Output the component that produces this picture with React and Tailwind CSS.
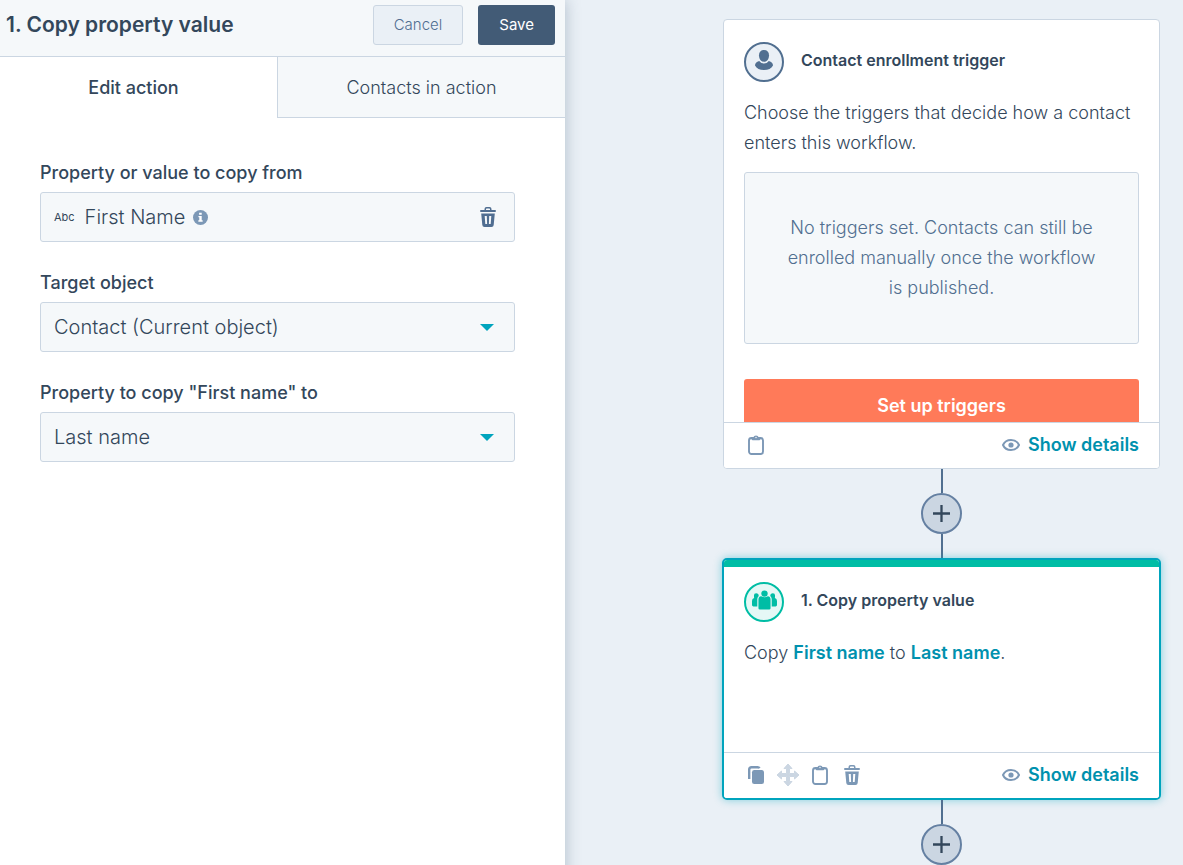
import React from "react";

// --- Icons ---
const TrashIcon = ({ className }) => (
  <svg viewBox="0 0 16 20" className={className} fill="currentColor" aria-hidden="true">
    <path d="M4.5 3V2Q4.5 0 6.500 0H9.500Q11.500 0 11.500 2V3H15Q16 3 16 4T15 5H1Q0 5 0 4T1 3ZM6 3H10V2.200Q10 1.500 9.300 1.500H6.700Q6 1.500 6 2.200Z" />
    <path
      fillRule="evenodd"
      d="M1.200 6.500H14.800L13.700 18Q13.500 20 11.500 20H4.500Q2.500 20 2.300 18ZM4.700 9L5.300 17H7.100L6.800 9ZM9.200 9L8.900 17H10.700L11.300 9Z"
    />
  </svg>
);

const ClipboardIcon = ({ className }) => (
  <svg viewBox="0 0 16 20" className={className} fill="none" aria-hidden="true">
    <rect x="1" y="3" width="14" height="16" rx="2.500" stroke="currentColor" strokeWidth="1.900" />
    <path fill="currentColor" d="M3 2.800H5Q6 .5 8 .5T11 2.800H13Q12.800 5.200 11.500 5.200H4.500Q3.200 5.200 3 2.800Z" />
    <circle cx="8" cy="2.500" r=".7" fill="#fff" />
  </svg>
);

const EyeIcon = ({ className }) => (
  <svg viewBox="0 0 18 12" className={className} fill="none" aria-hidden="true">
    <path
      stroke="currentColor"
      strokeWidth="2"
      d="M1 6C2.500 2.600 5.500 1 9 1S15.500 2.600 17 6C15.500 9.400 12.500 11 9 11S2.500 9.400 1 6Z"
    />
    <circle cx="9" cy="6" r="2.600" fill="currentColor" />
  </svg>
);

const CopyIcon = ({ className }) => (
  <svg viewBox="0 0 16 18" className={className} aria-hidden="true">
    <path
      fill="none"
      stroke="currentColor"
      strokeWidth="2.400"
      d="M1.200 13V3.500Q1.200 1.200 3.500 1.200H9.500Q11 1.200 11.500 2.300"
    />
    <rect x="4" y="4" width="12" height="14" rx="2.300" fill="currentColor" />
  </svg>
);

const MoveIcon = ({ className }) => (
  <svg viewBox="0 0 24 24" className={className} fill="currentColor" aria-hidden="true">
    <path
      stroke="currentColor"
      strokeLinejoin="round"
      d="M12 1L16 5.500H13.500V10.500H18.500V8L23 12L18.500 16V13.500H13.500V18.500H16L12 23L8 18.500H10.500V13.500H5.500V16L1 12L5.500 8V10.500H10.500V5.500H8Z"
    />
  </svg>
);

const PersonIcon = ({ className }) => (
  <svg viewBox="0 0 18 20" className={className} fill="currentColor" aria-hidden="true">
    <path d="M9 0C12.200 0 14 2 14 5.200C14 9 12 11.800 9 11.800S4 9 4 5.200C4 2 5.800 0 9 0Z" />
    <path d="M4.200 11Q6 13.500 9 13.500T13.800 11Q18 12.200 18 15.500Q15.500 20 9 20T0 15.500Q0 12.200 4.200 11Z" />
  </svg>
);

const GroupIcon = ({ className }) => (
  <svg viewBox="0 0 26 20" className={className} fill="currentColor" aria-hidden="true">
    <circle cx="13" cy="3.300" r="3.300" />
    <path d="M9.500 6.200Q13 8 16.500 6.200Q19.300 6.500 19.300 9.500V18.500Q19.300 20 17.800 20H8.200Q6.700 20 6.700 18.500V9.500Q6.700 6.500 9.500 6.200Z" />
    <path d="M2 5.500Q2 3 4.300 3Q7 3 7 5.800Q5.500 7.200 5.500 9V16.800H1.500Q0 16.800 0 15.300V11Q0 8.500 2.200 8Z" />
    <path d="M24 5.500Q24 3 21.700 3Q19 3 19 5.800Q20.500 7.200 20.500 9V16.800H24.500Q26 16.800 26 15.300V11Q26 8.500 23.800 8Z" />
  </svg>
);

const InfoIcon = ({ className }) => (
  <svg viewBox="0 0 16 16" className={className} aria-hidden="true">
    <circle cx="8" cy="8" r="8" fill="#7c98b6" />
    <path fill="#fff" d="M6.500 2.800H9.300V5H6.500ZM5.800 6.300H9.300V11H10.300V12.600H5.700V11H6.700V7.800H5.800Z" />
  </svg>
);

// --- Form fields ---
const SelectField = ({ id, label, value }) => (
  <div>
    <label htmlFor={id} className="block text-[18px] leading-6 font-medium mb-[7px]">
      {label}
    </label>
    <div className="relative">
      <select
        id={id}
        defaultValue={value}
        className="appearance-none block w-full h-[50px] pl-[13px] pr-12 rounded-[3px] border border-[#cbd6e2] bg-[#f5f8fa] text-[20px] font-light"
      >
        <option>{value}</option>
      </select>
      <svg viewBox="0 0 14 7" className="absolute right-[21px] top-[22px] w-[14px] h-[7px] pointer-events-none" aria-hidden="true">
        <path fill="#00a4bd" d="M0 0H14L7 7Z" />
      </svg>
    </div>
  </div>
);

// --- Edit panel ---
const EditPanel = () => (
  <aside className="relative z-10 bg-white shadow-[1px_0_14px_rgba(45,75,105,0.28)]">
    <header className="flex items-center justify-between pt-[5px] pb-[11px] pl-[6px] pr-[10px] bg-[#f5f8fa] border-b border-[#cbd6e2]">
      <h1 className="text-[21px] leading-6 font-semibold">1. Copy property value</h1>
      <div className="flex gap-[15px]">
        <button className="h-10 px-5 rounded-[3px] border border-[#cbd6e2] bg-[#eaf0f6] text-[#506e91] text-[15px] font-light">
          Cancel
        </button>
        <button className="h-10 px-[21px] rounded-[3px] bg-[#425b76] text-white text-[15px] font-normal">Save</button>
      </div>
    </header>
    <div role="tablist" className="grid grid-cols-[277fr_288fr]">
      <button role="tab" aria-selected="true" className="h-[61px] pr-[10px] text-[18px] font-medium">
        Edit action
      </button>
      <button
        role="tab"
        aria-selected="false"
        className="h-[61px] border-l border-b border-[#cbd6e2] bg-[#f5f8fa] text-[18px] font-light"
      >
        Contacts in action
      </button>
    </div>
    <form className="flex flex-col gap-[29px] pt-[43px] pl-10 pr-[50px]">
      <div>
        <p className="text-[18px] leading-6 font-medium mb-[7px]">Property or value to copy from</p>
        <div className="flex items-center h-[50px] pl-[13px] pr-[18px] rounded-[3px] border border-[#cbd6e2] bg-[#f5f8fa]">
          <span className="text-[11px] mr-[10px]">Abc</span>
          <span className="text-[20px] font-light">First Name</span>
          <InfoIcon className="w-[15px] h-[15px] ml-2" />
          <button type="button" aria-label="Remove" className="ml-auto text-[#506e91]">
            <TrashIcon className="w-4 h-5" />
          </button>
        </div>
      </div>
      <SelectField id="target" label="Target object" value="Contact (Current object)" />
      <SelectField id="property" label={'Property to copy "First name" to'} value="Last name" />
    </form>
  </aside>
);

// --- Workflow canvas ---
const CardFooter = ({ children }) => (
  <footer className="flex items-center h-[46px] pl-6 pr-5 pb-[2px] border-t border-[#cbd6e2] bg-white text-[#7c98b6]">
    <div className="flex items-center gap-3">{children}</div>
    <a href="#details" className="ml-auto flex items-center gap-2 text-[18px] font-semibold text-[#0091ae]">
      <EyeIcon className="w-[18px] h-3 text-[#7c98b6]" />
      Show details
    </a>
  </footer>
);

const Line = () => <div className="w-[2px] h-6 bg-[#516f90]" />;

const AddButton = () => (
  <button
    aria-label="Add action"
    className="flex items-center justify-center w-[41px] h-[41px] rounded-full border-2 border-[#6580a2] bg-[#cbd6e2] text-[#33475b]"
  >
    <svg viewBox="0 0 17 17" className="w-[17px] h-[17px]" fill="none" stroke="currentColor" strokeWidth="2.300" aria-hidden="true">
      <path d="M8.500 0V17M0 8.500H17" />
    </svg>
  </button>
);

const TriggerCard = () => (
  <article className="mx-px rounded-[4px] border border-[#cbd6e2] bg-white overflow-hidden">
    <div className="h-[402px] px-5 pt-[22px] overflow-hidden">
      <div className="flex items-start gap-[17px]">
        <span className="flex justify-center pt-[6px] w-10 h-10 rounded-full border-2 border-[#516f90] bg-[#eaf0f6] text-[#516f90]">
          <PersonIcon className="w-[18px] h-5" />
        </span>
        <h2 className="pt-[6px] text-[16px] leading-6 font-semibold">Contact enrollment trigger</h2>
      </div>
      <p className="mt-4 text-[18px] leading-[30px] font-light">
        Choose the triggers that decide how a contact enters this workflow.
      </p>
      <div className="mt-[14px] px-10 py-10 rounded-[3px] border border-[#cbd6e2] bg-[#f5f8fa] text-[18px] leading-[30px] font-light text-center text-[#516f90]">
        No triggers set. Contacts can still be enrolled manually once the workflow is published.
      </div>
      <button className="block w-full h-[52px] mt-[35px] rounded-[3px] bg-[#ff7a59] text-white text-[18px] font-semibold">
        Set up triggers
      </button>
    </div>
    <CardFooter>
      <button aria-label="Clipboard">
        <ClipboardIcon className="w-4 h-5" />
      </button>
    </CardFooter>
  </article>
);

const ActionCard = () => (
  <article className="w-full rounded-[5px] border-2 border-[#00a4bd] bg-white overflow-hidden shadow-[0_0_8px_rgba(0,164,189,0.45)]">
    <div className="h-[192px] px-5 pt-[15px] border-t-[7px] border-[#00bda5]">
      <div className="flex items-start gap-[17px]">
        <span className="flex justify-center pt-[6px] w-10 h-10 rounded-full border-2 border-[#00bda5] bg-[#e5f8f6] text-[#00bda5]">
          <GroupIcon className="w-[25px] h-5" />
        </span>
        <h2 className="pt-[6px] text-[16px] leading-6 font-semibold">1. Copy property value</h2>
      </div>
      <p className="mt-4 text-[18px] leading-[30px] font-light">
        Copy <span className="font-semibold text-[#0091ae]">First name</span> to{" "}
        <span className="font-semibold text-[#0091ae]">Last name</span>.
      </p>
    </div>
    <CardFooter>
      <button aria-label="Copy">
        <CopyIcon className="w-4 h-[18px]" />
      </button>
      <button aria-label="Move" className="text-[#cbd6e2]">
        <MoveIcon className="w-6 h-6" />
      </button>
      <button aria-label="Clipboard">
        <ClipboardIcon className="w-4 h-5" />
      </button>
      <button aria-label="Delete" className="ml-1">
        <TrashIcon className="w-4 h-5" />
      </button>
    </CardFooter>
  </article>
);

const Canvas = () => (
  <main className="flex flex-col items-center pt-[19px] pl-[157px] pr-[22px]">
    <TriggerCard />
    <Line />
    <AddButton />
    <Line />
    <ActionCard />
    <Line />
    <AddButton />
    <Line />
  </main>
);

const App = () => (
  <div className="grid grid-cols-[565fr_618fr] h-screen overflow-hidden bg-[#eaf0f6] font-['Inter',sans-serif] text-[#33475b]">
    <EditPanel />
    <Canvas />
  </div>
);

export default App;
